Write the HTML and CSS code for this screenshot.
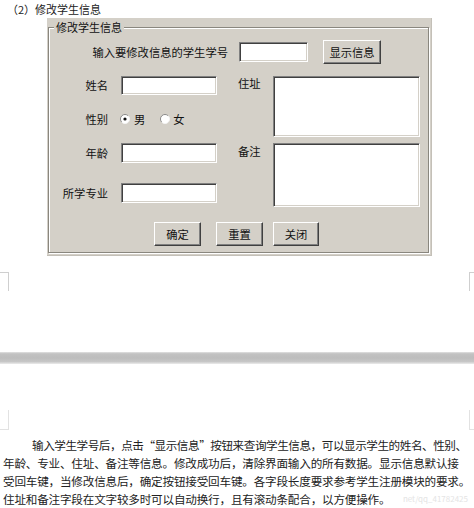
FILE: index.html
```html
<!DOCTYPE html>
<html lang="zh-CN">
<head>
<meta charset="utf-8">
<title>修改学生信息</title>
<link rel="stylesheet" href="styles.css">
</head>
<body>
<div class="heading">（2）修改学生信息</div>
<div class="dialog">
  <div class="group">
    <span class="legend">修改学生信息</span>
    <div class="top-row">
      <span class="top-label">输入要修改信息的学生学号</span>
      <input class="field id-field" type="text">
      <button class="btn btn-show">显示信息</button>
    </div>
    <div class="main">
      <span class="lbl lbl-name">姓名</span>
      <input class="field in-name" type="text">
      <span class="lbl lbl-sex">性别</span>
      <div class="radios">
        <svg class="radio" width="10" height="10" viewBox="0 0 10 10"><circle cx="5" cy="5" r="4.5" fill="#fff"/><path d="M1.8 8.2 A4.5 4.5 0 0 1 8.2 1.8" stroke="#8a8a8a" fill="none"/><path d="M8.2 1.8 A4.5 4.5 0 0 1 1.8 8.2" stroke="#f4f4f4" fill="none"/><circle cx="5" cy="5" r="1.6" fill="#111"/></svg>
        <span class="opt opt-m">男</span>
        <svg class="radio radio-f" width="10" height="10" viewBox="0 0 10 10"><circle cx="5" cy="5" r="4.5" fill="#fff"/><path d="M1.8 8.2 A4.5 4.5 0 0 1 8.2 1.8" stroke="#8a8a8a" fill="none"/><path d="M8.2 1.8 A4.5 4.5 0 0 1 1.8 8.2" stroke="#f4f4f4" fill="none"/></svg>
        <span class="opt">女</span>
      </div>
      <span class="lbl lbl-age">年龄</span>
      <input class="field in-age" type="text">
      <span class="lbl lbl-major">所学专业</span>
      <input class="field in-major" type="text">
      <span class="lbl lbl-addr">住址</span>
      <textarea class="field ta-addr"></textarea>
      <span class="lbl lbl-note">备注</span>
      <textarea class="field ta-note"></textarea>
    </div>
    <div class="btn-row">
      <button class="btn btn-ok">确定</button>
      <button class="btn btn-reset">重置</button>
      <button class="btn btn-close">关闭</button>
    </div>
  </div>
</div>
<div class="marks marks-bottom"><span class="mark-l"></span><span class="mark-r"></span></div>
<div class="page-gap"></div>
<div class="marks marks-top"><span class="mark-l"></span><span class="mark-r"></span></div>
<div class="para">
  <div class="line first">输入学生学号后，点击“显示信息”按钮来查询学生信息，可以显示学生的姓名、性别、</div>
  <div class="line">年龄、专业、住址、备注等信息。修改成功后，清除界面输入的所有数据。显示信息默认接</div>
  <div class="line">受回车键，当修改信息后，确定按钮接受回车键。各字段长度要求参考学生注册模块的要求。</div>
  <div class="line last"><span>住址和备注字段在文字较多时可以自动换行，且有滚动条配合，以方便操作。</span><span class="watermark">net/qq_41782425</span></div>
</div>
</body>
</html>
```

FILE: styles.css
```css
body {
  margin: 0;
  width: 474px;
  height: 508px;
  overflow: hidden;
  background: #fff;
  font-family: "Noto Sans CJK SC", "Noto Sans", sans-serif;
  color: #111;
}

.heading {
  height: 18px;
  line-height: 18px;
  font-size: 11px;
  padding-left: 7px;
  color: #222;
}

.dialog {
  margin-left: 47px;
  width: 385px;
  height: 238px;
  box-sizing: border-box;
  background: #d4d0c8;
  padding: 9px 2px 2px 1px;
  border-right: 1px solid #c4c0b8;
  border-bottom: 1px solid #c4c0b8;
}

.group {
  position: relative;
  height: 100%;
  box-sizing: border-box;
  border: 1px solid #8a877f;
  box-shadow: inset 1px 1px 0 #fff, 1px 1px 0 #fff;
  padding-top: 12px;
}

.legend {
  position: absolute;
  left: 5px;
  top: -9px;
  padding: 0 2px;
  background: #d4d0c8;
  font-size: 11px;
  line-height: 16px;
  color: #111;
}

.top-row {
  display: flex;
  align-items: center;
  height: 24px;
}

.top-label {
  width: 179px;
  text-align: right;
  font-size: 11.3px;
  line-height: 16px;
}

.field {
  box-sizing: border-box;
  margin: 0;
  padding: 0;
  background: #fff;
  border-style: solid;
  border-width: 1px;
  border-color: #808080 #fff #fff #808080;
  box-shadow: inset 1px 1px 0 #404040, inset -1px -1px 0 #d4d0c8;
  outline: none;
  resize: none;
  font: inherit;
}

.id-field {
  width: 69px;
  height: 20px;
  margin-left: 11px;
}

.btn {
  box-sizing: border-box;
  margin: 0;
  padding: 0;
  height: 24px;
  background: #d4d0c8;
  border: 1px solid;
  border-color: #fff #404040 #404040 #fff;
  box-shadow: inset -1px -1px 0 #808080;
  font-family: inherit;
  font-size: 11.3px;
  color: #111;
  display: flex;
  align-items: center;
  justify-content: center;
}

.btn-show {
  width: 58px;
  margin-left: 15px;
}

.main {
  display: grid;
  grid-template-columns: 72px 96px 56px 147px;
  grid-template-rows: 19px 48px 20px 20px 24px;
  margin-top: 12px;
}

.lbl {
  font-size: 11.3px;
  color: #111;
}

.lbl-name, .lbl-sex, .lbl-age, .lbl-major {
  grid-column: 1;
  text-align: right;
  padding-right: 13px;
}

.lbl-name { grid-row: 1; line-height: 19px; }
.lbl-sex { grid-row: 2; align-self: center; line-height: 16px; }
.lbl-age { grid-row: 3; line-height: 20px; }
.lbl-major { grid-row: 5; line-height: 20px; align-self: start; }

.in-name { grid-column: 2; grid-row: 1; width: 96px; height: 19px; }
.in-age { grid-column: 2; grid-row: 3; width: 96px; height: 20px; }
.in-major { grid-column: 2; grid-row: 5; width: 96px; height: 20px; align-self: start; }

.radios {
  grid-column: 2;
  grid-row: 2;
  display: flex;
  align-items: center;
  font-size: 11.3px;
}

.radio { flex: none; margin-left: -1px; }
.radio-f { margin-left: 15px; }
.opt { margin-left: 3px; line-height: 16px; }
.opt-m { margin-left: 4px; }

.lbl-addr, .lbl-note {
  grid-column: 3;
  padding-left: 21px;
  align-self: start;
}
.lbl-addr { grid-row: 1 / 3; line-height: 14px; }
.lbl-note { grid-row: 3 / 6; line-height: 16px; }

.ta-addr { grid-column: 4; grid-row: 1 / 3; width: 147px; height: 61px; align-self: start; }
.ta-note { grid-column: 4; grid-row: 3 / 6; width: 147px; height: 64px; align-self: start; }

.btn-row {
  display: flex;
  margin-top: 15px;
  padding-left: 105px;
}

.btn-ok { width: 47px; margin-right: 15px; }
.btn-reset { width: 47px; margin-right: 10px; }
.btn-close { width: 46px; }

.marks {
  display: flex;
  justify-content: space-between;
}

.marks-bottom {
  margin-top: 16px;
  height: 19px;
}
.marks-bottom .mark-l { width: 8px; border-top: 1px solid #cfcfcf; border-right: 1px solid #cfcfcf; }
.marks-bottom .mark-r { width: 4px; border-top: 1px solid #cfcfcf; border-left: 1px solid #cfcfcf; }

.page-gap {
  margin-top: 61px;
  height: 12px;
  background: linear-gradient(#e2e2e2 0, #c2c2c2 15%, #bdbdbd 50%, #c6c6c6 80%, #ececec 100%);
}

.marks-top {
  margin-top: 46px;
  height: 20px;
}
.marks-top .mark-l { width: 8px; border-bottom: 1px solid #e2e2e2; border-right: 1px solid #e2e2e2; }
.marks-top .mark-r { width: 4px; border-bottom: 1px solid #e2e2e2; border-left: 1px solid #e2e2e2; }

.para {
  margin-top: 6px;
  padding-left: 3px;
  font-size: 11.6px;
  line-height: 18px;
  color: #222;
  letter-spacing: -0.2px;
}

.line { white-space: nowrap; }
.line.first { padding-left: 29px; letter-spacing: -0.45px; }
.line.last { display: flex; overflow: hidden; }

.watermark {
  margin-left: auto;
  padding-right: 6px;
  font-size: 8px;
  line-height: 18px;
  letter-spacing: 0;
  color: #e4e4e4;
}
```
